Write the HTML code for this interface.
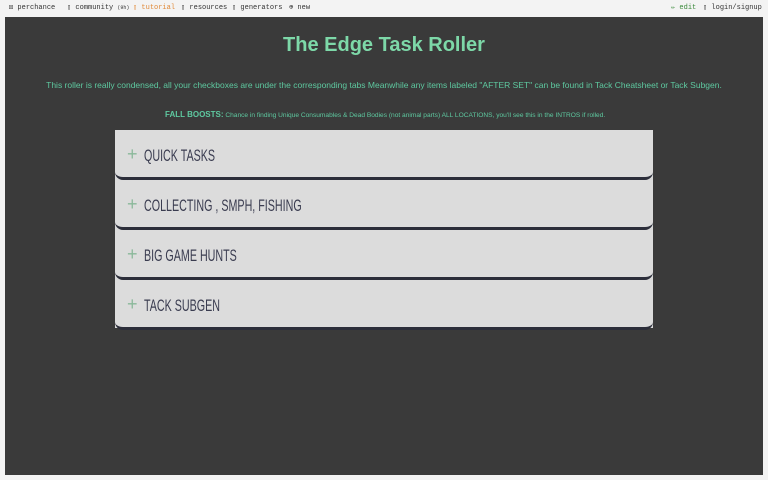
<!DOCTYPE html>
<html><head><meta charset="utf-8"><style>
*{margin:0;padding:0;box-sizing:border-box}
body{width:768px;height:480px;background:#f3f3f3;font-family:"Liberation Sans",sans-serif;position:relative;overflow:hidden}
.nav{position:absolute;top:0;left:0;right:0;height:17px;font-family:"Liberation Mono",monospace;font-size:7px;color:#333;line-height:17px}
.nav span{position:absolute;top:0;white-space:nowrap}
.main{position:absolute;left:5px;top:17px;width:758px;height:458px;background:#3a3a3a}
h1{position:absolute;top:34px;left:0;width:768px;text-align:center;color:#7dd8a8;font-size:20px;font-weight:bold}
.p1{position:absolute;top:80px;left:0;width:768px;text-align:center;color:#5ec9a0;font-size:8.5px;white-space:nowrap}
.p2{position:absolute;top:110px;left:165px;color:#5ec9a0;font-size:6.6px;white-space:nowrap}
.p2 b{font-size:8px}
.acc{position:absolute;left:115px;top:130px;width:538px;height:198px;background:#d9d9d9}
.it{height:50px;border-bottom:3px solid #2c2e3a;border-radius:0 0 8px 8px;background:#dcdcdc;position:relative}
.it span{position:absolute;left:12px;top:14px;color:#8ab89a;font-size:18px}
.it em{position:absolute;left:29px;top:16px;font-style:normal;color:#3a3c50;font-size:17px;transform:scaleX(.63);transform-origin:left;white-space:nowrap}
</style></head><body>
<div class="nav">
<span style="left:9px">⚄ perchance</span>
<span style="left:67px">▯ community <small style="font-size:5px">(9h)</small></span>
<span style="left:133px;color:#e08a3a">▯ tutorial</span>
<span style="left:181px">▯ resources</span>
<span style="left:232px">▯ generators</span>
<span style="left:289px">⊕ new</span>
<span style="left:671px;color:#3a8a3a">✏ edit</span>
<span style="left:703px">▯ login/signup</span>
</div>
<div class="main"></div>
<h1>The Edge Task Roller</h1>
<div class="p1">This roller is really condensed, all your checkboxes are under the corresponding tabs Meanwhile any items labeled "AFTER SET" can be found in Tack Cheatsheet or Tack Subgen.</div>
<div class="p2"><b>FALL BOOSTS:</b> Chance in finding Unique Consumables &amp; Dead Bodies (not animal parts) ALL LOCATIONS, you'll see this in the INTROS if rolled.</div>
<div class="acc">
<div class="it"><span>+</span><em>QUICK TASKS</em></div>
<div class="it"><span>+</span><em>COLLECTING , SMPH, FISHING</em></div>
<div class="it"><span>+</span><em>BIG GAME HUNTS</em></div>
<div class="it"><span>+</span><em>TACK SUBGEN</em></div>
</div>
</body></html>
